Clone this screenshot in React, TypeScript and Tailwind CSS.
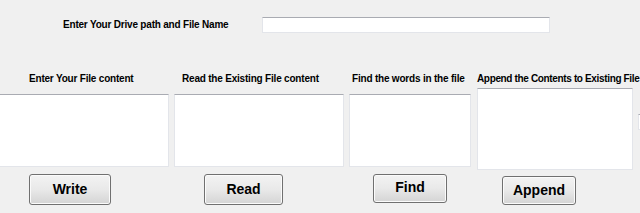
const box = "bg-white border border-[#e3e5ea] border-t-[#a9abb2] shrink-0";
const btn =
  "shrink-0 flex items-center justify-center rounded-[3px] border border-[#707070] bg-linear-to-b from-[#f3f3f3] via-[#e9e9e9] to-[#d4d4d4] shadow-[inset_0_0_0_1px_#fbfbfb] text-[14px] font-bold text-black";

export default function App() {
  return (
    <div className="w-[640px] h-[213px] overflow-hidden bg-[#f0f0f0] font-['Liberation_Sans',Arial,sans-serif] text-black">
      {/* path row */}
      <div className="flex items-center pt-[16px] h-[33px]">
        <span className="ml-[63px] w-[199px] shrink-0 text-[10px] font-bold tracking-[-0.2px] leading-none">
          Enter Your Drive path and File Name
        </span>
        <div className={`${box} w-[288px] h-[16px]`} />
      </div>

      {/* labels */}
      <div className="flex items-center mt-[40px] h-[12px] text-[10px] font-bold tracking-[-0.2px] leading-none whitespace-nowrap">
        <span className="ml-[29px] w-[153px] shrink-0">Enter Your File content</span>
        <span className="w-[170px] shrink-0">Read the Existing File content</span>
        <span className="w-[125px] shrink-0">Find the words in the file</span>
        <span className="shrink-0 tracking-[-0.35px]">Append the Contents to Existing File</span>
      </div>

      {/* text areas */}
      <div className="flex items-start mt-[3px]">
        <div className={`${box} ml-[-1px] mt-[6px] w-[170px] h-[73px]`} />
        <div className={`${box} ml-[5px] mt-[6px] w-[170px] h-[73px]`} />
        <div className={`${box} ml-[5px] mt-[6px] w-[122px] h-[73px]`} />
        <div className={`${box} ml-[6px] w-[156px] h-[82px]`} />
        <div className={`${box} ml-[5px] mt-[26px] w-[20px] h-[16px]`} />
      </div>

      {/* buttons */}
      <div className="flex items-start mt-[4px]">
        <button className={`${btn} ml-[29px] w-[82px] h-[31px]`}>Write</button>
        <button className={`${btn} ml-[93px] w-[79px] h-[31px]`}>Read</button>
        <button className={`${btn} ml-[90px] w-[74px] h-[29px] pb-[3px]`}>Find</button>
        <button className={`${btn} ml-[55px] mt-[2px] w-[74px] h-[29px]`}>Append</button>
      </div>
    </div>
  );
}
